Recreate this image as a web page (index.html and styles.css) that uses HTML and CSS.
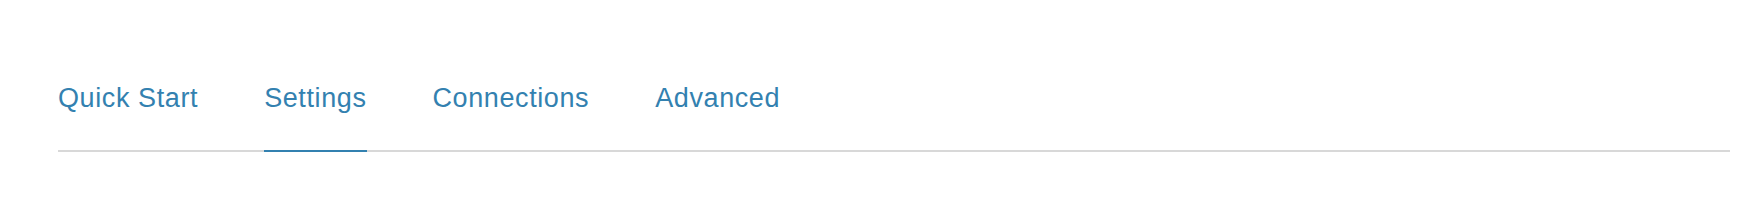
FILE: index.html
```html
<!DOCTYPE html>
<html lang="en">
<head>
    <meta charset="UTF-8">
    <meta name="viewport" content="width=device-width, initial-scale=1.0">
    <title>Settings</title>
    <link rel="stylesheet" href="styles.css">
</head>
<body>
    <div class="container">
        <nav class="tabs">
            <a href="#" class="tab">Quick Start</a>
            <a href="#" class="tab active">Settings</a>
            <a href="#" class="tab">Connections</a>
            <a href="#" class="tab">Advanced</a>
        </nav>
    </div>
</body>
</html>
```

FILE: styles.css
```css
:root {
    --primary-color: #3381b0;
    --border-color: #d8d8d8;
}

body, html {
    margin: 0;
    background-color: #ffffff;
    font-family: "Liberation Sans", Arial, sans-serif;
}

.container {
    padding: 82px 30px 0 58px;
}

.tabs {
    display: flex;
    gap: 66px;
    border-bottom: 2px solid var(--border-color);
}

.tab {
    display: block;
    font-size: 27px;
    line-height: 32px;
    letter-spacing: 0.6px;
    color: var(--primary-color);
    text-decoration: none;
    padding-bottom: 36px;
    margin-bottom: -2px;
    border-bottom: 2px solid transparent;
}

.tab.active {
    border-bottom-color: var(--primary-color);
}
```
